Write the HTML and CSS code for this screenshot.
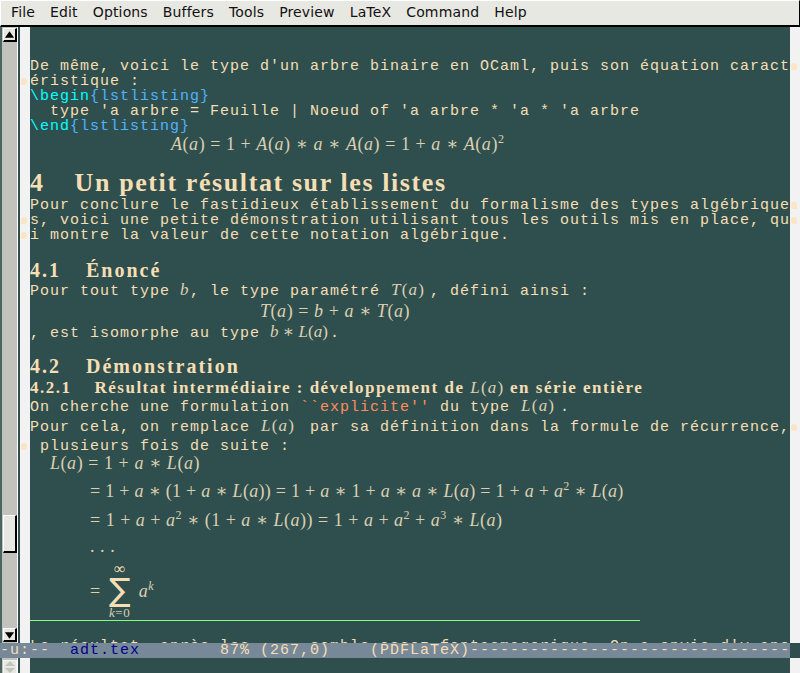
FILE: index.html
```html
<!DOCTYPE html>
<html lang="fr">
<head>
<meta charset="utf-8">
<title>adt.tex</title>
<link rel="stylesheet" href="styles.css">
</head>
<body>
<div class="frame">
  <nav class="menubar">
    <span>File</span><span>Edit</span><span>Options</span><span>Buffers</span><span>Tools</span><span>Preview</span><span>LaTeX</span><span>Command</span><span>Help</span>
  </nav>
  <div class="main">
    <div class="scrollbar">
      <div class="sb-btn sb-up"><svg width="12" height="10" viewBox="0 0 12 10"><path d="M6 1 11 8H1z" fill="#000"/></svg></div>
      <div class="sb-thumb"></div>
      <div class="sb-btn sb-down"><svg width="12" height="10" viewBox="0 0 12 10"><path d="M1 2H11L6 9z" fill="#000"/></svg></div>
    </div>
    <div class="buffer">
      <div class="gap-top"></div>
      <div class="line wrap-r">De même, voici le type d'un arbre binaire en OCaml, puis son équation caract</div>
      <div class="line wrap-l">éristique :</div>
      <div class="line"><span class="kw">\begin</span><span class="arg">{lstlisting}</span></div>
      <div class="line">  type 'a arbre = Feuille | Noeud of 'a arbre * 'a * 'a arbre</div>
      <div class="line"><span class="kw">\end</span><span class="arg">{lstlisting}</span></div>
      <div class="eq eq-arbre"><i>A</i>(<i>a</i>) = 1 + <i>A</i>(<i>a</i>) ∗ <i>a</i> ∗ <i>A</i>(<i>a</i>) = 1 + <i>a</i> ∗ <i>A</i>(<i>a</i>)<sup>2</sup></div>
      <h2 class="sec">4<span class="sec-gap"></span>Un petit résultat sur les listes</h2>
      <div class="line wrap-r">Pour conclure le fastidieux établissement du formalisme des types algébrique</div>
      <div class="line wrap-l wrap-r">s, voici une petite démonstration utilisant tous les outils mis en place, qu</div>
      <div class="line wrap-l">i montre la valeur de cette notation algébrique.</div>
      <h3 class="sub sub-enonce">4.1<span class="sub-gap"></span>Énoncé</h3>
      <div class="line">Pour tout type <span class="mi c1"><i>b</i></span>, le type paramétré <span class="mi c4"><i>T</i>(<i>a</i>)</span>, défini ainsi :</div>
      <div class="eq eq-t"><i>T</i>(<i>a</i>) = <i>b</i> + <i>a</i> ∗ <i>T</i>(<i>a</i>)</div>
      <div class="line">, est isomorphe au type <span class="mi c6"><i>b</i> ∗ <i>L</i>(<i>a</i>)</span>.</div>
      <h3 class="sub sub-demo">4.2<span class="sub-gap"></span>Démonstration</h3>
      <h4 class="subsub">4.2.1<span class="subsub-gap"></span>Résultat intermédiaire : développement de <span class="bm"><i>L</i>(<i>a</i>)</span> en série entière</h4>
      <div class="line line-20">On cherche une formulation <span class="str">``explicite''</span> du type <span class="mi c4"><i>L</i>(<i>a</i>)</span>.</div>
      <div class="line line-19 wrap-r">Pour cela, on remplace <span class="mi c4"><i>L</i>(<i>a</i>)</span> par sa définition dans la formule de récurrence, </div>
      <div class="line wrap-l"> plusieurs fois de suite :</div>
      <div class="eq eq-l0"><i>L</i>(<i>a</i>) = 1 + <i>a</i> ∗ <i>L</i>(<i>a</i>)</div>
      <div class="eq eq-l1">= 1 + <i>a</i> ∗ (1 + <i>a</i> ∗ <i>L</i>(<i>a</i>)) = 1 + <i>a</i> ∗ 1 + <i>a</i> ∗ <i>a</i> ∗ <i>L</i>(<i>a</i>) = 1 + <i>a</i> + <i>a</i><sup>2</sup> ∗ <i>L</i>(<i>a</i>)</div>
      <div class="eq eq-l2">= 1 + <i>a</i> + <i>a</i><sup>2</sup> ∗ (1 + <i>a</i> ∗ <i>L</i>(<i>a</i>)) = 1 + <i>a</i> + <i>a</i><sup>2</sup> + <i>a</i><sup>3</sup> ∗ <i>L</i>(<i>a</i>)</div>
      <div class="eq eq-l3">. . .</div>
      <div class="eq eq-sum">
        <span>=</span>
        <span class="sum"><span class="sum-top">∞</span><span class="sum-sign">∑</span><span class="sum-bot"><i>k</i>=0</span></span>
        <span><i>a</i><sup><i>k</i></sup></span>
      </div>
      <div class="rule"></div>
      <div class="line line-tail wrap-r">Le résultat, après les      semble assez fantasmagorique. On a envie d'y apo</div>
    </div>
  </div>
  <div class="modeline">-u:--  <span class="fname">adt.tex</span>        87% (267,0)    (PDFLaTeX)--------------------------------</div>
  <div class="bottom">
    <div class="scrollbar sb-short">
      <div class="sb-btn sb-off"><svg width="12" height="12" viewBox="0 0 12 12"><path d="M6 0 11 5H1zM1 7H11L6 12z" fill="#c4c4be"/></svg></div>
    </div>
    <div class="buffer"></div>
  </div>
</div>
</body>
</html>
```
FILE: styles.css
```css
* { box-sizing: border-box; }
html, body { margin: 0; padding: 0; }
body { width: 800px; height: 673px; overflow: hidden; background: #2f4f4f; }
.frame { display: flex; flex-direction: column; width: 800px; height: 673px; }

.menubar {
  display: flex; height: 27px; flex: none; padding-left: 10px; gap: 15px;
  align-items: center; padding-bottom: 2px;
  background: #e8e8e3; color: #111;
  font: 14px/20px "DejaVu Sans", sans-serif; letter-spacing: .15px;
  border-top: 1px solid #fff; border-left: 1px solid #fff;
  border-bottom: 2px solid #000; border-right: 1px solid #000;
}

.main { display: flex; height: 616px; flex: none; overflow: hidden; }

.scrollbar {
  flex: none; width: 20px; display: flex; flex-direction: column;
  padding: 1px 0 1px 1px;
  background: #c2c3bc;
  border-left: 2px solid #4c6464; border-right: 2px solid #2f4f4f;
  box-shadow: inset -1px 0 0 #fff;
}
.sb-btn {
  width: 14px; height: 14px; flex: none;
  display: flex; align-items: center; justify-content: center;
  background: #e8e8e3;
  border: 1px solid #fff; border-right: 2px solid #000; border-bottom: 2px solid #000;
}
.sb-thumb {
  width: 14px; height: 38px; flex: none; margin-top: 473px;
  background: #e8e8e3;
  border: 1px solid #fff; border-right: 2px solid #000; border-bottom: 2px solid #000;
}
.sb-down { margin-top: auto; }
.sb-short { padding-top: 2px; }
.sb-off { border: 1px solid #f4f4f0; }

.buffer {
  flex: none; width: 780px; min-height: 100%;
  background: #2f4f4f; color: #f5deb3;
  border-left: 10px solid #f2f2f2; border-right: 10px solid #f2f2f2;
}
.gap-top { height: 32px; }

.line {
  position: relative; width: 760px; height: 15px; white-space: pre;
  font: 15px/15px "Liberation Mono", monospace; letter-spacing: 1px;
}
.line-20 { height: 20px; }
.line-19 { height: 19px; }
.line-tail { margin-top: 18px; }
.wrap-l::before, .wrap-r::after {
  content: ""; position: absolute; top: 4px; width: 6px; height: 7px;
  background: #fbe5c6;
}
.wrap-l::before { left: -9px; border-radius: 3px 3px 3px 0; }
.wrap-r::after { right: -7px; border-radius: 3px 3px 0 3px; }

.kw { color: #00ffff; }
.arg { color: #4fb4ff; }
.str { color: #ff8c5a; }

.mi, .eq, .bm { font-family: "Liberation Serif", "DejaVu Serif", serif; }
.mi { display: inline-block; letter-spacing: 0; font-size: 17px; line-height: 0; color: #dccfb0; white-space: nowrap; }
.c1 { width: 10px; }
.c4 { width: 40px; letter-spacing: 1.2px; padding-left: 1px; }
.c6 { width: 60px; }

.eq { color: #dccfb0; font-size: 18px; white-space: pre; letter-spacing: .55px; }
.eq sup { font-size: 12px; line-height: 0; }
.eq-arbre { height: 22px; line-height: 20px; padding-left: 141px; }
.eq-t { height: 27px; line-height: 24px; padding-left: 230px; }
.eq-l0 { height: 21px; line-height: 18px; padding-left: 20px; }
.eq-l1 { height: 29px; line-height: 32px; padding-left: 60px; letter-spacing: .27px; }
.eq-l2 { height: 29px; line-height: 32px; padding-left: 60px; letter-spacing: .5px; }
.eq-l3 { height: 29px; line-height: 26px; padding-left: 60px; }
.eq-sum { display: flex; align-items: center; gap: 7px; height: 58px; padding-left: 60px; }

.sum { display: flex; flex-direction: column; align-items: center; width: 24px; color: #f5deb3; }
.sum-top { font-size: 16px; line-height: 10px; letter-spacing: 0; }
.sum-sign { font-family: "DejaVu Sans", sans-serif; font-size: 32px; line-height: 33px; letter-spacing: 0; }
.sum-bot { font-size: 13px; line-height: 12px; color: #dccfb0; letter-spacing: .6px; }

.sec, .sub, .subsub { margin: 0; font-family: "Liberation Serif", serif; font-weight: bold; color: #f5deb3; white-space: nowrap; display: flex; align-items: flex-end; }
.sec { height: 42px; padding-bottom: 1px; font-size: 26px; line-height: 28px; letter-spacing: 1.6px; }
.sec-gap { width: 30px; }
.sub { font-size: 20px; line-height: 24px; letter-spacing: 2px; }
.sub-enonce { height: 41px; padding-bottom: 2px; }
.sub-demo { height: 37px; }
.sub-gap { width: 25px; }
.subsub { height: 22px; padding-bottom: 2px; font-size: 17px; line-height: 20px; letter-spacing: 1.5px; white-space: pre; }
.subsub-gap { width: 23px; }
.bm { font-weight: normal; color: #dccfb0; letter-spacing: 1.2px; }

.rule { height: 1px; width: 610px; background: #80ff80; }

.modeline {
  flex: none; height: 15px; width: 790px; overflow: hidden; white-space: pre;
  background: #778899; color: #f5deb3;
  font: 15px/15px "Liberation Mono", monospace; letter-spacing: 1px;
}
.fname { color: #00008b; }
.bottom { flex: none; display: flex; height: 15px; overflow: hidden; }
.bottom .buffer { height: 15px; min-height: 0; }
```
